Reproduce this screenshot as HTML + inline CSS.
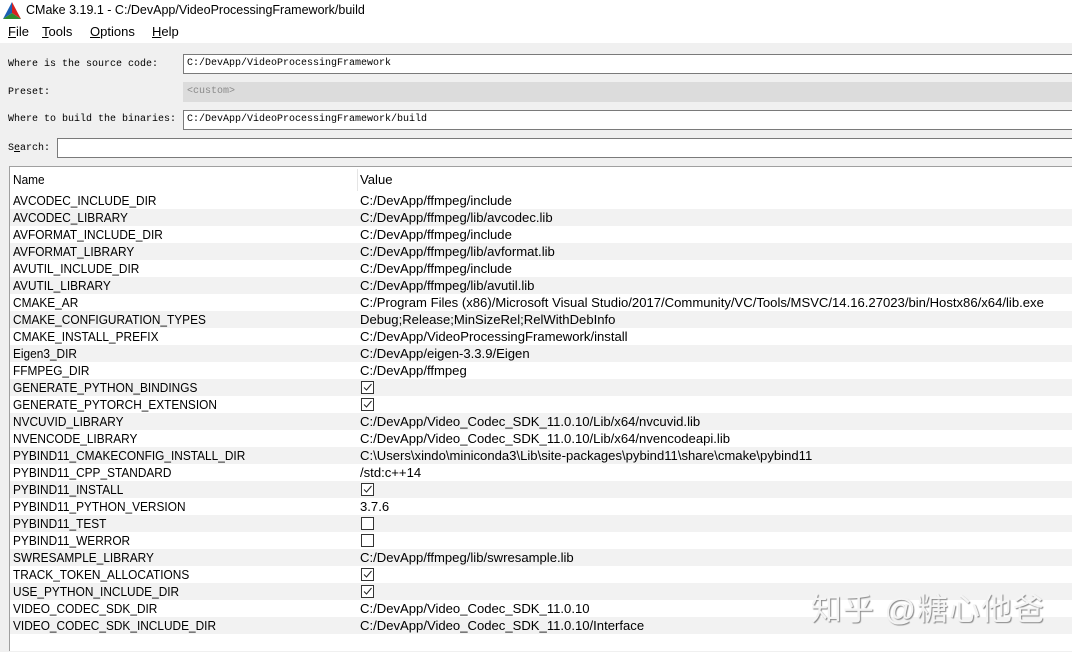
<!DOCTYPE html>
<html><head><meta charset="utf-8"><style>
*{margin:0;padding:0;box-sizing:border-box}
body{width:1072px;height:651px;overflow:hidden;background:#f0f0f0;font-family:"Liberation Sans","Noto Sans CJK SC",sans-serif;position:relative}
.abs{position:absolute}
.title{left:0;top:0;width:1072px;height:21px;background:#fff;font-size:12.5px;line-height:20px;padding-left:26px;color:#000}
.menu{left:0;top:21px;width:1072px;height:22px;background:#fff;font-size:13px;line-height:22px}
.menu span{position:absolute;top:0}
.lbl{font-family:"Liberation Mono",monospace;font-size:10px;color:#000;left:8px}
.inp{background:#fff;border:1px solid #7a7a7a;font-family:"Liberation Mono",monospace;font-size:10px;line-height:18px;padding-left:3px;color:#000}
.tbl{left:9px;top:166px;width:1063px;height:485px;background:#fff;border-left:1px solid #a0a0a0;border-top:1px solid #a0a0a0}
.row{position:absolute;left:0;width:1063px;height:17px;font-size:13.1px;line-height:17px;color:#000;white-space:nowrap}
.row.g{background:#f2f2f2}
.row .n{position:absolute;left:3px;transform:scaleX(0.906);transform-origin:0 0}
.row .v{position:absolute;left:350px}
.cb{position:absolute;left:351px;top:2px;width:13px;height:13px;border:1px solid #333;background:#fff}
.wm{right:27px;top:584px;font-size:31px;color:#f4f4f4;text-shadow:1px 1px 1px #888;letter-spacing:1px}
</style></head><body>
<div class="abs title">CMake 3.19.1 - C:/DevApp/VideoProcessingFramework/build</div>
<svg class="abs" style="left:3px;top:2px" width="18" height="17" viewBox="0 0 18 17"><polygon points="9,0 0,17 9,11" fill="#1a5fb4"/><polygon points="9,0 18,17 9,11" fill="#d62020"/><polygon points="0,17 18,17 9,11" fill="#2e8b2e"/></svg>
<div class="abs menu"><span style="left:8px"><u>F</u>ile</span><span style="left:42px"><u>T</u>ools</span><span style="left:90px"><u>O</u>ptions</span><span style="left:152px"><u>H</u>elp</span></div>
<div class="abs lbl" style="top:59px">Where is the source code:</div>
<div class="abs inp" style="left:183px;top:54px;width:900px;height:20px">C:/DevApp/VideoProcessingFramework</div>
<div class="abs lbl" style="top:87px">Preset:</div>
<div class="abs inp" style="left:183px;top:82px;width:900px;height:20px;background:#dcdcdc;border-color:#dcdcdc;color:#8a8a8a">&lt;custom&gt;</div>
<div class="abs lbl" style="top:114px">Where to build the binaries:</div>
<div class="abs inp" style="left:183px;top:110px;width:900px;height:20px">C:/DevApp/VideoProcessingFramework/build</div>
<div class="abs lbl" style="top:143px">S<u>e</u>arch:</div>
<div class="abs inp" style="left:57px;top:138px;width:1020px;height:20px"></div>
<div class="abs tbl">
<div class="row" style="top:0;height:25px;line-height:25px"><span class="n">Name</span><span class="v">Value</span></div>
<div style="position:absolute;left:347px;top:2px;width:1px;height:22px;background:#e5e5e5"></div>
</div>
<div class="abs tbl" style="left:10px;top:167px;border:none;background:none">
<div class="row" style="top:25px"><span class="n">AVCODEC_INCLUDE_DIR</span><span class="v">C:/DevApp/ffmpeg/include</span></div>
<div class="row g" style="top:42px"><span class="n">AVCODEC_LIBRARY</span><span class="v">C:/DevApp/ffmpeg/lib/avcodec.lib</span></div>
<div class="row" style="top:59px"><span class="n">AVFORMAT_INCLUDE_DIR</span><span class="v">C:/DevApp/ffmpeg/include</span></div>
<div class="row g" style="top:76px"><span class="n">AVFORMAT_LIBRARY</span><span class="v">C:/DevApp/ffmpeg/lib/avformat.lib</span></div>
<div class="row" style="top:93px"><span class="n">AVUTIL_INCLUDE_DIR</span><span class="v">C:/DevApp/ffmpeg/include</span></div>
<div class="row g" style="top:110px"><span class="n">AVUTIL_LIBRARY</span><span class="v">C:/DevApp/ffmpeg/lib/avutil.lib</span></div>
<div class="row" style="top:127px"><span class="n">CMAKE_AR</span><span class="v">C:/Program Files (x86)/Microsoft Visual Studio/2017/Community/VC/Tools/MSVC/14.16.27023/bin/Hostx86/x64/lib.exe</span></div>
<div class="row g" style="top:144px"><span class="n">CMAKE_CONFIGURATION_TYPES</span><span class="v">Debug;Release;MinSizeRel;RelWithDebInfo</span></div>
<div class="row" style="top:161px"><span class="n">CMAKE_INSTALL_PREFIX</span><span class="v">C:/DevApp/VideoProcessingFramework/install</span></div>
<div class="row g" style="top:178px"><span class="n">Eigen3_DIR</span><span class="v">C:/DevApp/eigen-3.3.9/Eigen</span></div>
<div class="row" style="top:195px"><span class="n">FFMPEG_DIR</span><span class="v">C:/DevApp/ffmpeg</span></div>
<div class="row g" style="top:212px"><span class="n">GENERATE_PYTHON_BINDINGS</span><span class="cb"><svg width="11" height="11" style="position:absolute;left:0;top:0"><path d="M2 5.5 L4.5 8 L9.5 2" stroke="#222" fill="none"/></svg></span></div>
<div class="row" style="top:229px"><span class="n">GENERATE_PYTORCH_EXTENSION</span><span class="cb"><svg width="11" height="11" style="position:absolute;left:0;top:0"><path d="M2 5.5 L4.5 8 L9.5 2" stroke="#222" fill="none"/></svg></span></div>
<div class="row g" style="top:246px"><span class="n">NVCUVID_LIBRARY</span><span class="v">C:/DevApp/Video_Codec_SDK_11.0.10/Lib/x64/nvcuvid.lib</span></div>
<div class="row" style="top:263px"><span class="n">NVENCODE_LIBRARY</span><span class="v">C:/DevApp/Video_Codec_SDK_11.0.10/Lib/x64/nvencodeapi.lib</span></div>
<div class="row g" style="top:280px"><span class="n">PYBIND11_CMAKECONFIG_INSTALL_DIR</span><span class="v">C:\Users\xindo\miniconda3\Lib\site-packages\pybind11\share\cmake\pybind11</span></div>
<div class="row" style="top:297px"><span class="n">PYBIND11_CPP_STANDARD</span><span class="v">/std:c++14</span></div>
<div class="row g" style="top:314px"><span class="n">PYBIND11_INSTALL</span><span class="cb"><svg width="11" height="11" style="position:absolute;left:0;top:0"><path d="M2 5.5 L4.5 8 L9.5 2" stroke="#222" fill="none"/></svg></span></div>
<div class="row" style="top:331px"><span class="n">PYBIND11_PYTHON_VERSION</span><span class="v">3.7.6</span></div>
<div class="row g" style="top:348px"><span class="n">PYBIND11_TEST</span><span class="cb"></span></div>
<div class="row" style="top:365px"><span class="n">PYBIND11_WERROR</span><span class="cb"></span></div>
<div class="row g" style="top:382px"><span class="n">SWRESAMPLE_LIBRARY</span><span class="v">C:/DevApp/ffmpeg/lib/swresample.lib</span></div>
<div class="row" style="top:399px"><span class="n">TRACK_TOKEN_ALLOCATIONS</span><span class="cb"><svg width="11" height="11" style="position:absolute;left:0;top:0"><path d="M2 5.5 L4.5 8 L9.5 2" stroke="#222" fill="none"/></svg></span></div>
<div class="row g" style="top:416px"><span class="n">USE_PYTHON_INCLUDE_DIR</span><span class="cb"><svg width="11" height="11" style="position:absolute;left:0;top:0"><path d="M2 5.5 L4.5 8 L9.5 2" stroke="#222" fill="none"/></svg></span></div>
<div class="row" style="top:433px"><span class="n">VIDEO_CODEC_SDK_DIR</span><span class="v">C:/DevApp/Video_Codec_SDK_11.0.10</span></div>
<div class="row g" style="top:450px"><span class="n">VIDEO_CODEC_SDK_INCLUDE_DIR</span><span class="v">C:/DevApp/Video_Codec_SDK_11.0.10/Interface</span></div>
</div>
<div class="abs wm">知乎 @糖心他爸</div>
</body></html>
